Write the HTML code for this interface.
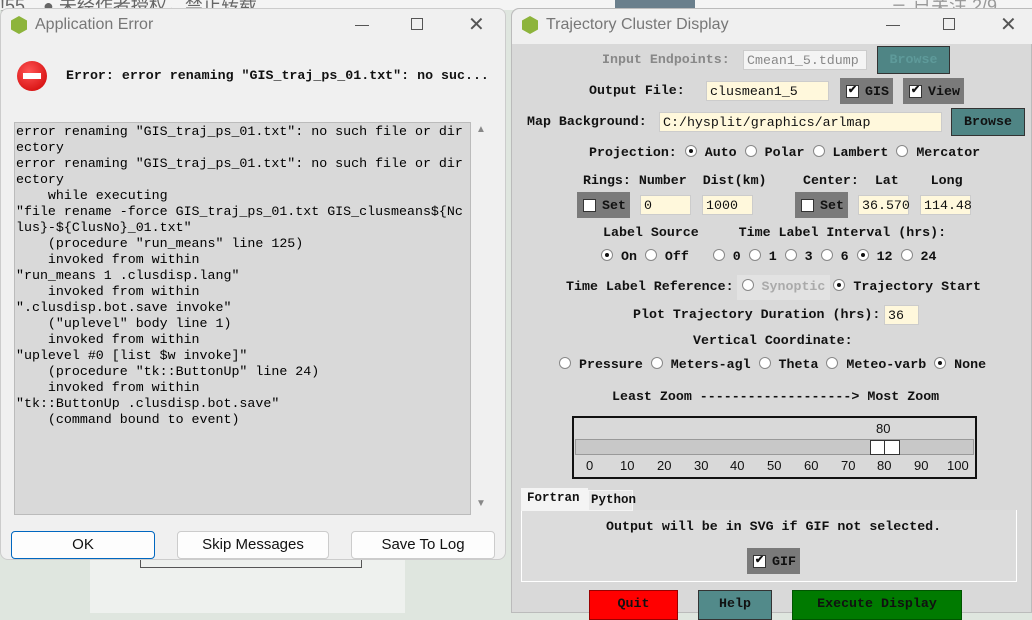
<!DOCTYPE html>
<html><head><meta charset="utf-8"><style>
*{margin:0;padding:0;box-sizing:border-box}
body{width:1032px;height:613px;overflow:hidden;position:relative;background:#dfe6df;font-family:"Liberation Mono",monospace;}
.a{position:absolute;white-space:pre}
.m{font-family:"Liberation Mono",monospace;font-size:13.3px;font-weight:bold;color:#111}
.s{font-family:"Liberation Sans","Noto Sans CJK SC",sans-serif}
.inp{position:absolute;background:#fff8dc;border:1px solid #ccc;height:20px;font-family:"Liberation Mono",monospace;font-size:13.3px;color:#111;padding:2px 3px;line-height:15px}
.cb{position:absolute;background:#7a7a7a;height:26px;color:#111;font-weight:bold;font-size:13.3px;font-family:"Liberation Mono",monospace;padding-left:6px;display:flex;align-items:center}
.cb i{display:flex;align-items:center;justify-content:center;width:13px;height:13px;background:#fff;border:1px solid #333;margin-right:6px;font-style:normal;font-size:11px;line-height:11px}
.r{display:inline-block;width:12px;height:12px;border-radius:50%;background:#fff;border:1px solid #888;vertical-align:-1px;position:relative}
.r.on:after{content:"";position:absolute;left:3px;top:3px;width:4px;height:4px;border-radius:50%;background:#111}
.btn{position:absolute;text-align:center;font-size:13.3px;font-family:"Liberation Mono",monospace;font-weight:bold;color:#111}
</style></head><body>
<div class="a" style="left:0;top:0;width:1032px;height:10px;background:#f4f4f4"></div>
<div class="a s" style="left:0;top:-8px;font-size:18px;color:#666">!55　● 未经作者授权，禁止转载</div>
<div class="a" style="left:615px;top:0;width:80px;height:8px;background:#6a7f8c"></div>
<div class="a s" style="left:890px;top:-8px;font-size:18px;color:#999">三 已关注 2/9</div>
<div class="a" style="left:90px;top:560px;width:315px;height:53px;background:#eef1ee"></div>
<div class="a" style="left:140px;top:560px;width:222px;height:8px;border:1px solid #555;border-top:none"></div>

<div class="a" style="left:0;top:8px;width:506px;height:552px;background:#f0f0f0;border:1px solid #ccc;border-radius:8px"></div>
<div class="a" style="left:11px;top:16px;width:16px;height:18px;background:#8db43c;clip-path:polygon(50% 0,100% 25%,100% 75%,50% 100%,0 75%,0 25%)"></div>
<div class="a s" style="left:35px;top:16px;font-size:16px;color:#777">Application Error</div>
<div class="a" style="left:355px;top:25px;width:14px;height:1px;background:#555"></div>
<div class="a" style="left:411px;top:18px;width:12px;height:12px;border:1px solid #555"></div>
<div class="a s" style="left:468px;top:12px;font-size:20px;color:#555">✕</div>
<div class="a" style="left:17px;top:61px;width:30px;height:30px;border-radius:50%;background:radial-gradient(circle at 40% 35%,#f55,#c00)"></div>
<div class="a" style="left:23px;top:73px;width:18px;height:6px;background:#fff"></div>
<div class="a m" style="left:66px;top:68px">Error: error renaming "GIS_traj_ps_01.txt": no suc...</div>
<div class="a" style="left:14px;top:122px;width:457px;height:393px;background:#d9d9d9;border:1px solid #bbb"></div>
<div class="a m" style="left:16px;top:124px;line-height:16px;font-weight:normal;color:#000">error renaming "GIS_traj_ps_01.txt": no such file or dir
ectory
error renaming "GIS_traj_ps_01.txt": no such file or dir
ectory
    while executing
"file rename -force GIS_traj_ps_01.txt GIS_clusmeans${Nc
lus}-${ClusNo}_01.txt"
    (procedure "run_means" line 125)
    invoked from within
"run_means 1 .clusdisp.lang"
    invoked from within
".clusdisp.bot.save invoke"
    ("uplevel" body line 1)
    invoked from within
"uplevel #0 [list $w invoke]"
    (procedure "tk::ButtonUp" line 24)
    invoked from within
"tk::ButtonUp .clusdisp.bot.save"
    (command bound to event)</div>
<div class="a s" style="left:476px;top:124px;font-size:10px;color:#888">▲</div>
<div class="a s" style="left:476px;top:498px;font-size:10px;color:#888">▼</div>
<div class="a s" style="left:11px;top:531px;width:144px;height:28px;background:#fdfdfd;border:1px solid #0067c0;border-radius:4px;text-align:center;line-height:26px;font-size:15px;color:#111">OK</div>
<div class="a s" style="left:177px;top:531px;width:152px;height:28px;background:#fdfdfd;border:1px solid #ccc;border-radius:4px;text-align:center;line-height:26px;font-size:15px;color:#111">Skip Messages</div>
<div class="a s" style="left:351px;top:531px;width:144px;height:28px;background:#fdfdfd;border:1px solid #ccc;border-radius:4px;text-align:center;line-height:26px;font-size:15px;color:#111">Save To Log</div>

<div class="a" style="left:511px;top:8px;width:521px;height:605px;background:#d9d9d9;border:1px solid #bbb;border-radius:8px 0 0 0"></div>
<div class="a" style="left:512px;top:9px;width:520px;height:35px;background:#f0f0f0;border-radius:8px 0 0 0"></div>
<div class="a" style="left:522px;top:16px;width:16px;height:18px;background:#8db43c;clip-path:polygon(50% 0,100% 25%,100% 75%,50% 100%,0 75%,0 25%)"></div>
<div class="a s" style="left:546px;top:16px;font-size:16px;color:#777">Trajectory Cluster Display</div>
<div class="a" style="left:886px;top:25px;width:14px;height:1px;background:#555"></div>
<div class="a" style="left:943px;top:18px;width:12px;height:12px;border:1px solid #555"></div>
<div class="a s" style="left:1000px;top:12px;font-size:20px;color:#555">✕</div>

<div class="a m" style="left:602px;top:52px;color:#888">Input Endpoints:</div>
<div class="inp" style="left:743px;top:50px;width:124px;background:#f4f4f4;color:#888">Cmean1_5.tdump</div>
<div class="btn" style="left:877px;top:46px;width:73px;height:28px;background:#4f8585;border:1px solid #333;line-height:26px;color:#5e9a9a">Browse</div>

<div class="a m" style="left:589px;top:83px">Output File:</div>
<div class="inp" style="left:706px;top:81px;width:123px">clusmean1_5</div>
<div class="cb" style="left:840px;top:78px;width:53px"><i>✔</i>GIS</div>
<div class="cb" style="left:903px;top:78px;width:61px"><i>✔</i>View</div>

<div class="a m" style="left:527px;top:114px">Map Background:</div>
<div class="inp" style="left:659px;top:112px;width:283px">C:/hysplit/graphics/arlmap</div>
<div class="btn" style="left:951px;top:108px;width:74px;height:28px;background:#4f8585;border:1px solid #333;line-height:26px">Browse</div>

<div class="a m" style="left:589px;top:145px">Projection: <span class="r on"></span> Auto <span class="r"></span> Polar <span class="r"></span> Lambert <span class="r"></span> Mercator</div>

<div class="a m" style="left:583px;top:173px">Rings: Number  Dist(km)</div>
<div class="a m" style="left:803px;top:173px">Center:  Lat    Long</div>
<div class="cb" style="left:577px;top:192px;width:53px"><i></i>Set</div>
<div class="inp" style="left:640px;top:195px;width:51px">0</div>
<div class="inp" style="left:702px;top:195px;width:51px">1000</div>
<div class="cb" style="left:795px;top:192px;width:53px"><i></i>Set</div>
<div class="inp" style="left:858px;top:195px;width:51px">36.570</div>
<div class="inp" style="left:920px;top:195px;width:51px">114.48</div>

<div class="a m" style="left:603px;top:225px">Label Source     Time Label Interval (hrs):</div>
<div class="a m" style="left:601px;top:249px"><span class="r on"></span> On <span class="r"></span> Off   <span class="r"></span> 0 <span class="r"></span> 1 <span class="r"></span> 3 <span class="r"></span> 6 <span class="r on"></span> 12 <span class="r"></span> 24</div>

<div class="a" style="left:737px;top:275px;width:93px;height:25px;background:#e2e2e2"></div>
<div class="a m" style="left:566px;top:279px">Time Label Reference: <span class="r"></span> <span style="color:#aaa">Synoptic</span> <span class="r on"></span> Trajectory Start</div>
<div class="a m" style="left:633px;top:307px">Plot Trajectory Duration (hrs):</div>
<div class="inp" style="left:884px;top:305px;width:35px">36</div>
<div class="a m" style="left:693px;top:333px">Vertical Coordinate:</div>
<div class="a m" style="left:559px;top:357px"><span class="r"></span> Pressure <span class="r"></span> Meters-agl <span class="r"></span> Theta <span class="r"></span> Meteo-varb <span class="r on"></span> None</div>
<div class="a m" style="left:612px;top:389px">Least Zoom -------------------> Most Zoom</div>

<div class="a" style="left:572px;top:416px;width:405px;height:63px;border:2px solid #111"></div>
<div class="a s" style="left:876px;top:421px;font-size:13px;color:#111">80</div>
<div class="a" style="left:575px;top:439px;width:399px;height:16px;background:#c8c8c8;border:1px solid #999"></div>
<div class="a" style="left:870px;top:440px;width:30px;height:15px;background:#fff;border:1px solid #333"></div>
<div class="a" style="left:884px;top:440px;width:1px;height:15px;background:#333"></div>
<div class="a s" style="left:586px;top:458px;font-size:13px;color:#111">0</div>
<div class="a s" style="left:620px;top:458px;font-size:13px;color:#111">10</div>
<div class="a s" style="left:657px;top:458px;font-size:13px;color:#111">20</div>
<div class="a s" style="left:694px;top:458px;font-size:13px;color:#111">30</div>
<div class="a s" style="left:730px;top:458px;font-size:13px;color:#111">40</div>
<div class="a s" style="left:767px;top:458px;font-size:13px;color:#111">50</div>
<div class="a s" style="left:804px;top:458px;font-size:13px;color:#111">60</div>
<div class="a s" style="left:841px;top:458px;font-size:13px;color:#111">70</div>
<div class="a s" style="left:877px;top:458px;font-size:13px;color:#111">80</div>
<div class="a s" style="left:914px;top:458px;font-size:13px;color:#111">90</div>
<div class="a s" style="left:947px;top:458px;font-size:13px;color:#111">100</div>

<div class="a" style="left:521px;top:510px;width:496px;height:72px;background:#dcdcdc;border:1px solid #fff;border-top:none"></div>
<div class="a" style="left:521px;top:488px;width:67px;height:23px;background:#f4f4f4"></div>
<div class="a" style="left:588px;top:490px;width:45px;height:21px;background:#e8e8e8;border:1px solid #f4f4f4"></div>
<div class="a m" style="left:527px;top:491px;font-size:12.5px">Fortran</div>
<div class="a m" style="left:591px;top:493px;font-size:12.5px">Python</div>
<div class="a m" style="left:606px;top:519px">Output will be in SVG if GIF not selected.</div>
<div class="cb" style="left:747px;top:548px;width:53px"><i>✔</i>GIF</div>

<div class="btn" style="left:589px;top:590px;width:89px;height:30px;background:#f00;border:1px solid #900;line-height:26px">Quit</div>
<div class="btn" style="left:698px;top:590px;width:74px;height:30px;background:#528a8a;border:1px solid #333;line-height:26px">Help</div>
<div class="btn" style="left:792px;top:590px;width:170px;height:30px;background:#007a00;border:1px solid #050;line-height:26px">Execute Display</div>
</body></html>
